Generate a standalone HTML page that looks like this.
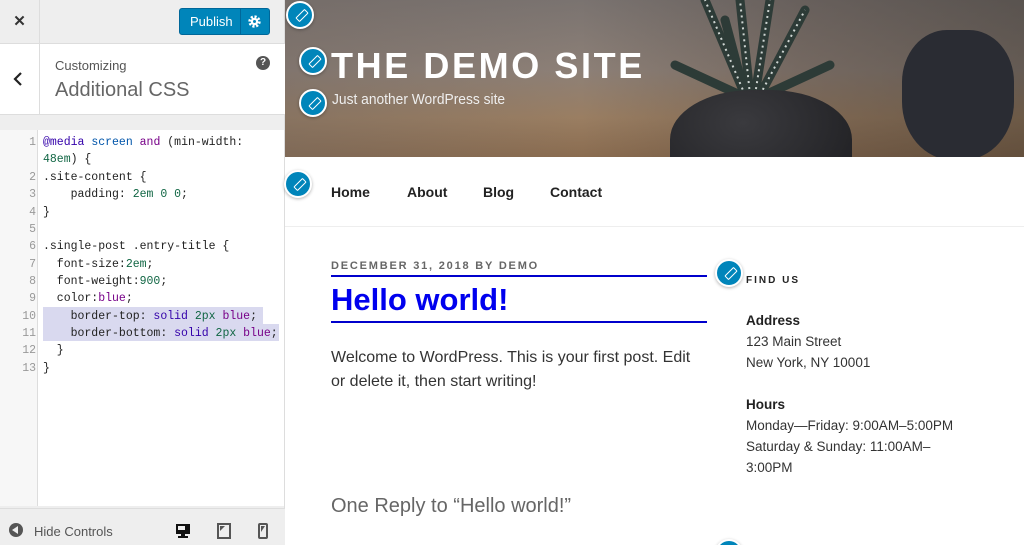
<!DOCTYPE html>
<html><head><style>
*{margin:0;padding:0;box-sizing:border-box}
html,body{width:1024px;height:545px;overflow:hidden}
body{position:relative;font-family:"Liberation Sans",sans-serif;background:#fff}
.side{position:absolute;left:0;top:0;width:285px;height:545px;background:#eee;border-right:1px solid #ddd}
.top{position:absolute;left:0;top:0;width:285px;height:44px;border-bottom:1px solid #ddd}
.close{position:absolute;left:0;top:0;width:40px;height:44px;border-right:1px solid #ddd;font-size:15px;font-weight:bold;color:#333;text-align:center;line-height:44px}
.pub{position:absolute;left:179px;top:8px;width:91px;height:27px;background:#0085ba;border:1px solid #006799;border-radius:3px;color:#fff;font-size:13px}
.pub span{position:absolute;left:10px;top:5px}
.pub i{position:absolute;left:60px;top:0;width:1px;height:25px;background:#006799}
.hdr{position:absolute;left:0;top:44px;width:285px;height:71px;background:#fff;border-bottom:1px solid #ddd}
.back{position:absolute;left:0;top:0;width:40px;height:70px;border-right:1px solid #ddd}
.code{position:absolute;left:0;top:130px;width:284px;height:376px;background:#fff;font-family:"Liberation Mono",monospace;font-size:11.5px;line-height:17.4px}
.gut{position:absolute;left:0;top:0;width:38px;height:376px;background:#f7f7f7;border-right:1px solid #ddd}
.ln{position:absolute;left:0;width:36px;text-align:right;color:#999}
.cl{position:absolute;left:43px;white-space:pre;color:#222}
.kw{color:#708}.at{color:#05a}.nm{color:#164}.v{color:#30a}
.hl{position:absolute;left:43px;height:17px;background:#d9d9ef}
.foot{position:absolute;left:0;top:508px;width:285px;height:37px;border-top:1px solid #ddd;background:#eee;color:#555;font-size:13px}
.pen{position:absolute;width:28px;height:28px;border-radius:50%;background:#0085ba;border:2px solid #fff;box-shadow:0 1px 3px rgba(0,0,0,.3)}
.pen:after{content:"";position:absolute;left:11px;top:6px;width:4px;height:11px;border:1.5px solid #fff;transform:rotate(45deg);border-radius:1px}
.nav a{position:absolute;top:184px;font-size:14px;color:#222;font-weight:bold}
</style></head><body>
<div class="side">
 <div class="top"><div class="close">✕</div>
  <div class="pub"><span>Publish</span><i></i>
   <svg style="position:absolute;left:67px;top:5px" width="15" height="15" viewBox="0 0 16 16"><circle cx="8" cy="8" r="5" fill="none" stroke="#fff" stroke-width="3.2" stroke-dasharray="2.2 1.7"/><circle cx="8" cy="8" r="4" fill="#fff"/><circle cx="8" cy="8" r="1.6" fill="#0085ba"/></svg>
  </div></div>
 <div class="hdr"><div class="back"><svg style="position:absolute;left:12px;top:27px" width="12" height="16" viewBox="0 0 12 16"><path d="M9 2L3 8l6 6" fill="none" stroke="#222" stroke-width="2.2"/></svg></div>
  <div style="position:absolute;left:55px;top:14px;font-size:13px;color:#555">Customizing</div>
  <div style="position:absolute;left:55px;top:35px;font-size:20px;color:#666">Additional CSS</div>
  <div style="position:absolute;left:256px;top:12px;width:14px;height:14px;border-radius:50%;background:#555;color:#fff;font-size:10px;font-weight:bold;text-align:center;line-height:14px">?</div>
 </div>
 <div class="code"><div class="gut"></div>
  <div class="hl" style="top:177px;width:220px"></div>
  <div class="hl" style="top:194px;width:236px"></div>
  <div class="ln" style="top:4px">1</div><div class="ln" style="top:39px">2</div><div class="ln" style="top:56px">3</div><div class="ln" style="top:74px">4</div><div class="ln" style="top:91px">5</div><div class="ln" style="top:108px">6</div><div class="ln" style="top:126px">7</div><div class="ln" style="top:143px">8</div><div class="ln" style="top:160px">9</div><div class="ln" style="top:178px">10</div><div class="ln" style="top:195px">11</div><div class="ln" style="top:212px">12</div><div class="ln" style="top:230px">13</div>
  <div class="cl" style="top:4px"><span class="v">@media</span> <span class="at">screen</span> <span class="kw">and</span> (min-width:</div>
  <div class="cl" style="top:21px"><span class="nm">48em</span>) {</div>
  <div class="cl" style="top:39px">.site-content {</div>
  <div class="cl" style="top:56px">    padding: <span class="nm">2em 0 0</span>;</div>
  <div class="cl" style="top:74px">}</div>
  <div class="cl" style="top:108px">.single-post .entry-title {</div>
  <div class="cl" style="top:126px">  font-size:<span class="nm">2em</span>;</div>
  <div class="cl" style="top:143px">  font-weight:<span class="nm">900</span>;</div>
  <div class="cl" style="top:160px">  color:<span class="kw">blue</span>;</div>
  <div class="cl" style="top:178px">    border-top: <span class="v">solid</span> <span class="nm">2px</span> <span class="kw">blue</span>;</div>
  <div class="cl" style="top:195px">    border-bottom: <span class="v">solid</span> <span class="nm">2px</span> <span class="kw">blue</span>;</div>
  <div class="cl" style="top:212px">  }</div>
  <div class="cl" style="top:230px">}</div>
 </div>
 <div class="foot">
  <div style="position:absolute;left:9px;top:14px;width:14px;height:14px;border-radius:50%;background:#555"></div>
  <div style="position:absolute;left:12px;top:17px;border-right:6px solid #eee;border-top:4px solid transparent;border-bottom:4px solid transparent"></div>
  <div style="position:absolute;left:34px;top:15px">Hide Controls</div>
  <svg style="position:absolute;left:175px;top:14px" width="16" height="16" viewBox="0 0 16 16"><rect x="1" y="1" width="14" height="10" fill="#111"/><rect x="3" y="3" width="7" height="4" fill="#eee"/><rect x="6" y="11" width="4" height="2" fill="#111"/><rect x="3" y="13" width="10" height="2" fill="#111"/></svg>
  <svg style="position:absolute;left:217px;top:14px" width="14" height="16" viewBox="0 0 14 16"><rect x="1" y="1" width="12" height="14" fill="none" stroke="#555" stroke-width="2"/><path d="M3 3h5L3 8z" fill="#555"/></svg>
  <svg style="position:absolute;left:258px;top:14px" width="10" height="16" viewBox="0 0 10 16"><rect x="1" y="1" width="8" height="14" rx="1" fill="none" stroke="#555" stroke-width="2"/><path d="M3 3h4L3 9z" fill="#555"/></svg>
 </div>
</div>
<div style="position:absolute;left:285px;top:0;width:739px;height:157px;overflow:hidden;background:linear-gradient(180deg,#7a7370 0%,#8d8077 45%,#9a7e62 75%,#8a6c50 100%)">
 <div style="position:absolute;left:0;top:0;width:739px;height:157px;background:linear-gradient(90deg,rgba(110,100,95,.4),rgba(0,0,0,0) 40%,rgba(60,50,45,.3) 70%,rgba(40,35,30,.4))"></div>
 <svg style="position:absolute;left:360px;top:0" width="200" height="100" viewBox="0 0 200 100"><g stroke="#2d3b37" stroke-width="9" stroke-linecap="round" fill="none"><path d="M100 95L60 0"/><path d="M105 95L95 0"/><path d="M110 95L125 0"/><path d="M115 95L160 10"/><path d="M95 95L30 65"/><path d="M120 95L185 65"/><path d="M100 95L80 20"/></g><g stroke="#cfd6d3" stroke-width="2" stroke-dasharray="2 4" fill="none"><path d="M100 95L60 0"/><path d="M105 95L95 0"/><path d="M110 95L125 0"/><path d="M115 95L160 10"/></g></svg>
 <div style="position:absolute;left:385px;top:90px;width:182px;height:110px;border-radius:45% 45% 10% 10%;background:radial-gradient(ellipse at 40% 30%,#3a3a3e,#1c1c1f)"></div>
 <div style="position:absolute;left:617px;top:30px;width:112px;height:130px;border-radius:40% 40% 45% 45%;background:#2a2c33"></div>
 <div style="position:absolute;left:46px;top:45px;font-size:36px;font-weight:900;color:#fff;letter-spacing:2.6px">THE DEMO SITE</div>
 <div style="position:absolute;left:47px;top:91px;font-size:15px;color:#eee;transform:scaleX(.92);transform-origin:left">Just another WordPress site</div>
</div>
<div class="pen" style="left:286px;top:1px"></div>
<div class="pen" style="left:299px;top:47px"></div>
<div class="pen" style="left:299px;top:89px"></div>
<div class="pen" style="left:284px;top:170px"></div>
<div class="pen" style="left:715px;top:259px"></div>
<div class="pen" style="left:715px;top:539px"></div>
<div class="nav"><a style="left:331px">Home</a><a style="left:407px">About</a><a style="left:483px">Blog</a><a style="left:550px">Contact</a></div>
<div style="position:absolute;left:285px;top:226px;width:739px;height:1px;background:#eee"></div>
<div style="position:absolute;left:331px;top:260px;font-size:11px;font-weight:bold;color:#666;letter-spacing:1.8px">DECEMBER 31, 2018 BY DEMO</div>
<div style="position:absolute;left:331px;top:275px;width:376px;height:48px;border-top:2px solid #0000cc;border-bottom:2px solid #0000cc">
 <div style="font-size:31px;font-weight:900;color:#0000ee;margin-top:5px">Hello world!</div></div>
<div style="position:absolute;left:331px;top:346px;width:368px;font-size:16px;line-height:24px;color:#333">Welcome to WordPress. This is your first post. Edit or delete it, then start writing!</div>
<div style="position:absolute;left:331px;top:495px;font-size:20px;color:#666">One Reply to “Hello world!”</div>
<div style="position:absolute;left:746px;top:275px;font-size:10px;font-weight:bold;letter-spacing:2px;color:#222">FIND US</div>
<div style="position:absolute;left:746px;top:310px;font-size:13.5px;line-height:21px;color:#333"><b style="color:#222">Address</b><br>123 Main Street<br>New York, NY 10001<br><br><b style="color:#222">Hours</b><br>Monday—Friday: 9:00AM–5:00PM<br>Saturday &amp; Sunday: 11:00AM–<br>3:00PM</div>
</body></html>
